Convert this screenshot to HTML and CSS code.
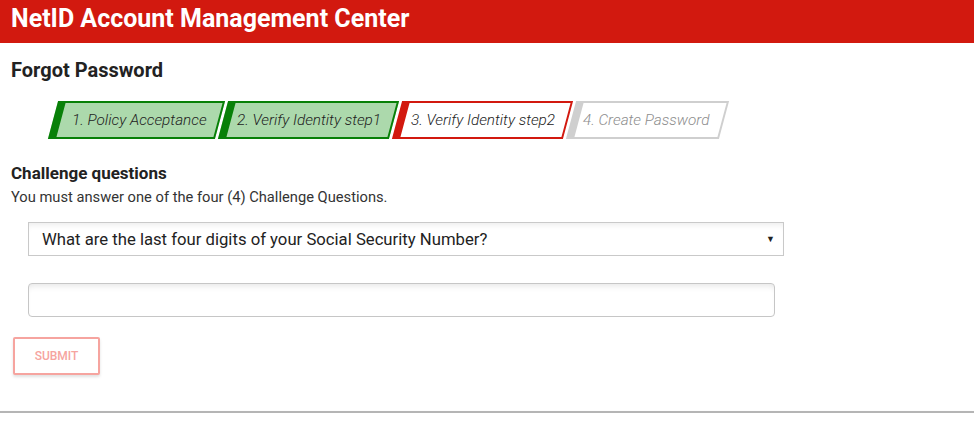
FILE: index.html
```html
<!DOCTYPE html>
<html>
<head>
  <title>NetID Account Management Center</title>
  <link rel="stylesheet" href="styles.css">
</head>
<body>

<div class="topbar">
  <h1>NetID Account Management Center</h1>
</div>

<div class="page">
  <h2>Forgot Password</h2>

  <div class="steps">
    <div class="step done first"><span>1. Policy Acceptance</span></div>
    <div class="step done"><span>2. Verify Identity step1</span></div>
    <div class="step current"><span>3. Verify Identity step2</span></div>
    <div class="step todo"><span>4. Create Password</span></div>
  </div>

  <h3>Challenge questions</h3>
  <p class="hint">You must answer one of the four (4) Challenge Questions.</p>

  <div class="field">
    <div class="select">
      <span>What are the last four digits of your Social Security Number?</span>
      <span class="caret">&#9660;</span>
    </div>
  </div>

  <div class="field">
    <input type="text" class="answer">
  </div>

  <button class="submit">Submit</button>
</div>

<div class="footer-line"></div>

</body>
</html>
```

FILE: styles.css
```css
body {
  margin: 0;
  font-family: Roboto, "Liberation Sans", Arial, sans-serif;
  color: #222;
  background: white;
}

.topbar {
  background-color: #d2190f;
  height: 43px;
  padding: 0 11px;
}
.topbar h1 {
  margin: 0;
  color: white;
  font-size: 25px;
  font-weight: 700;
  line-height: 37px;
}

.page {
  padding: 0 13px 0 11px;
  height: 368px;
}

h2 {
  margin: 0;
  padding-top: 15px;
  font-size: 20px;
  font-weight: 700;
  line-height: 24px;
  color: #222;
}

.steps {
  display: flex;
  margin: 19px 0 0 42px;
}
.step {
  height: 34px;
  border: 2px solid;
  border-left-width: 8px;
  transform: skewX(-15deg);
  margin-right: 3px;
  display: flex;
  align-items: center;
  padding: 0 11px 0 6px;
}
.step.first {
  padding-left: 11px;
}
.step span {
  transform: skewX(15deg);
  font-size: 15.3px;
  font-weight: 300;
  font-style: italic;
  white-space: nowrap;
}
.step.done {
  border-color: #088008;
  background-color: #acd9ac;
}
.step.current {
  border-color: #d2190f;
  background-color: white;
}
.step.todo {
  border-color: #cfcfcf;
  background-color: white;
  color: #8d8d8d;
  padding: 0 13px 0 4px;
}

h3 {
  margin: 24px 0 0;
  font-size: 17px;
  font-weight: 700;
  line-height: 20px;
}
.hint {
  margin: 5px 0 0;
  font-size: 14.7px;
  color: #333;
  line-height: 18px;
}

.field {
  padding-left: 17px;
}

.select {
  margin-top: 16px;
  width: 733px;
  height: 32px;
  border: 1px solid #c9c9c9;
  box-shadow: inset 0 6px 6px -4px rgba(0, 0, 0, 0.08);
  display: flex;
  align-items: center;
  justify-content: space-between;
  padding: 0 8px 0 13px;
  box-sizing: content-box;
  font-size: 16.7px;
  color: #222;
}
.select .caret {
  font-size: 9px;
  color: #222;
}

.answer {
  display: block;
  margin-top: 27px;
  width: 747px;
  height: 34px;
  box-sizing: border-box;
  border: 1px solid #c6c6c6;
  border-radius: 4px;
  box-shadow: inset 0 6px 6px -4px rgba(0, 0, 0, 0.1);
  font-size: 16px;
  padding: 0 10px;
}

.submit {
  display: block;
  margin: 20px 0 0 2px;
  width: 87px;
  height: 38px;
  background: white;
  border: 2px solid #f6a49f;
  border-radius: 2px;
  box-shadow: 0 2px 3px rgba(0, 0, 0, 0.12);
  color: #f6a49f;
  font-family: Roboto, "Liberation Sans", Arial, sans-serif;
  font-size: 12px;
  font-weight: 500;
  text-transform: uppercase;
}

.footer-line {
  height: 2px;
  background-color: #b5b5b5;
  box-shadow: 0 1px 2px rgba(0, 0, 0, 0.15);
}
```
